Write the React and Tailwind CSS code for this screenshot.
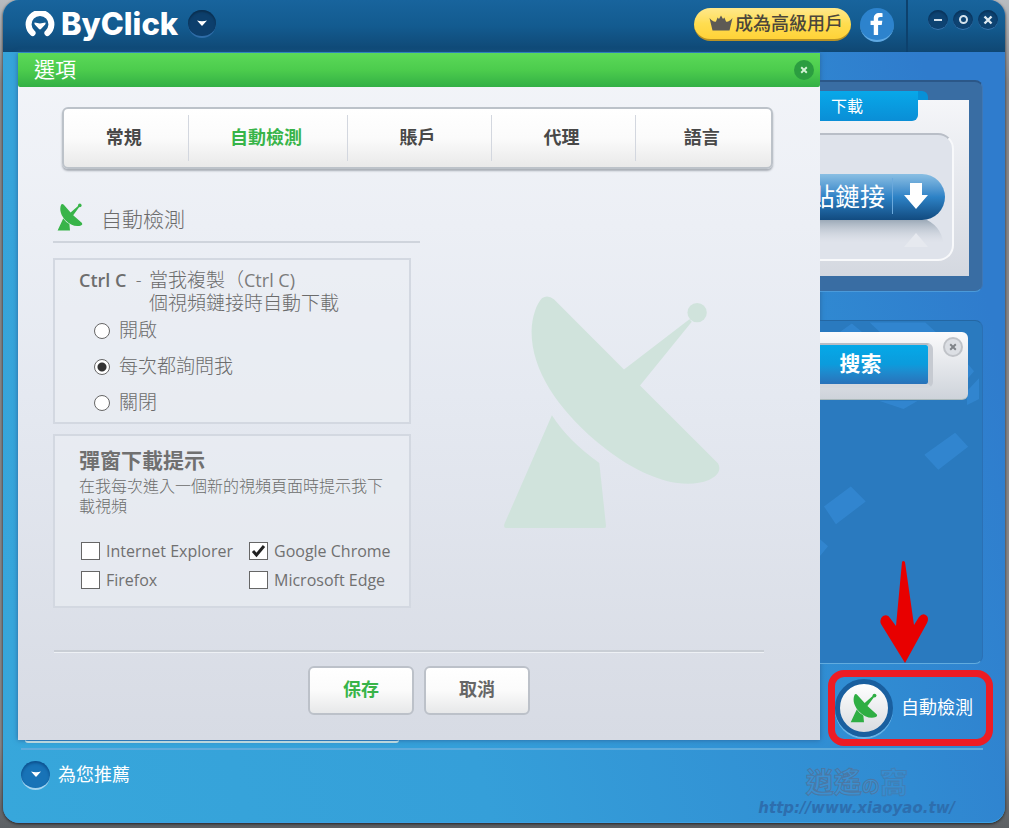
import React from "react";

const cx = (...names) => names.filter(Boolean).join(" ");

function Dish({ className }) {
  return (
    <svg viewBox="70 46 652 698" className={className} fill="currentColor" aria-hidden="true">
      <path d="M222 56 L432 266 L628 116 L635 123 L480 314 L714 548 C726 572 706 588 686 597 C600 632 470 585 345 478 C235 382 155 270 155 152 C156 108 170 70 186 53 Q203 41 222 56 Z" />
      <circle cx="651" cy="96" r="29" />
      <path d="M216 403 Q265 480 358 546 L378 734 Q379 741 371 741 L78 741 Q70 740 74 728 Z" />
    </svg>
  );
}

function SmallDish({ className }) {
  return (
    <svg viewBox="0 0 26 28" className={className} fill="currentColor" aria-hidden="true">
      <path d="M4.2 1.6 Q5.4 0.4 6.8 1.8 L13.6 9.4 L21.6 2.4 L22.6 3.4 L16.2 12.2 L25 20 Q26 21.6 24 22.4 C19 24.4 13 21.8 8.6 17.4 C4.4 13.2 1.8 7 4.2 1.6 Z" />
      <circle cx="22.8" cy="2.4" r="1.8" />
      <path d="M6.2 15.4 Q8.6 18.8 12.4 21 L13 27.4 H0.6 Z" />
    </svg>
  );
}

function Cross({ className }) {
  return (
    <svg viewBox="0 0 10 10" className={className} stroke="currentColor" strokeWidth="2.4" aria-hidden="true">
      <path d="M1.5 1.5 L8.5 8.5 M8.5 1.5 L1.5 8.5" />
    </svg>
  );
}

function LogoMark() {
  return (
    <svg viewBox="0 0 30 26" className="h-[26px] w-[30px]" fill="none" aria-hidden="true">
      <path d="M7.6 22 A11.4 11.4 0 1 1 22.4 22" stroke="#fff" strokeWidth="6" strokeLinecap="round" />
      <path d="M9.6 11.6 Q15 13.2 20.4 11.6 Q21 12.4 20.2 13.4 L16 18 Q15 18.8 14 18 L9.8 13.4 Q9 12.4 9.6 11.6 Z" fill="#fff" />
    </svg>
  );
}

function Chevron({ className }) {
  return (
    <svg viewBox="0 0 10 6" className={className} fill="#fff" aria-hidden="true">
      <path d="M0 0.5 Q5 2 10 0.5 L5.5 5.5 Q5 6 4.5 5.5 Z" />
    </svg>
  );
}

function Crown() {
  return (
    <svg viewBox="0 0 24 16" className="h-4 w-6" fill="#5d5a55" aria-hidden="true">
      <path d="M0.5 3 Q4.5 7.6 7 6.6 L8.6 2.6 L10 4 L12 0.6 L14 4 L15.4 2.6 L17 6.6 Q19.5 7.6 23.5 3 L20.5 15.5 L3.5 15.5 Z" />
    </svg>
  );
}

const roundDark =
  "flex size-5 items-center justify-center rounded-full border-b border-[#3a76b0] bg-[#0e4372] text-[#dfeaf2] shadow-[inset_0_2px_2px_#09345c]";

function TitleBar() {
  return (
    <header className="flex h-[52px] shrink-0 items-start bg-linear-to-b from-[#18649d] via-[#135b90] to-[#0f4773] pl-[22px] pr-[7px]">
      <div className="flex flex-1 items-center pt-1">
        <LogoMark />
        <h1 className="ml-[6px] font-['Inter',sans-serif] text-[31px] leading-10 font-extrabold text-white">ByClick</h1>
        <button aria-label="menu" className="ml-[10px] flex size-7 items-center justify-center rounded-full border-b-2 border-[#2f6da8] bg-[#0d3f6c] shadow-[inset_0_2px_2px_#0a2f50]">
          <Chevron className="h-[6px] w-[10px]" />
        </button>
      </div>
      <button className="mt-2 flex h-[33px] w-[157px] items-center rounded-full border-b-2 border-[#b99325] bg-linear-to-b from-[#ffe88a] via-[#ffdd50] to-[#ffd237] pb-px pl-[15px] text-lg leading-6 font-medium whitespace-nowrap text-[#4b463b]">
        <Crown />
        <span className="ml-[2px]">成為高級用戶</span>
      </button>
      <a href="#facebook" aria-label="Facebook" className="mt-2 ml-[9px] flex size-[34px] items-center justify-center rounded-full border-b-2 border-[#5fa9e4] bg-[#2d83cd]">
        <svg viewBox="0 0 16 26" className="h-6 w-4" fill="#fff" aria-hidden="true">
          <path d="M4.5 25 V14 H1 V9.6 H4.5 V7 C4.5 3 6.8 1 10.5 1 C12.3 1 13.6 1.2 14 1.3 V5.3 H11.5 C9.7 5.3 9.2 6.2 9.2 7.5 V9.6 H13.8 L13.1 14 H9.2 V25 Z" />
        </svg>
      </a>
      <div className="ml-3 flex h-full items-start gap-[5px] border-l-2 border-[#0d416d] pt-[10px] pl-5">
        <button aria-label="minimize" className={roundDark}><span className="h-[2px] w-2 bg-[#d5e2ec]" /></button>
        <button aria-label="maximize" className={roundDark}><span className="size-[9px] rounded-full border-2 border-[#d5e2ec]" /></button>
        <button aria-label="close window" className={roundDark}><Cross className="size-[10px]" /></button>
      </div>
    </header>
  );
}

const tabs = ["常規", "自動檢測", "賬戶", "代理", "語言"];

function Tabs() {
  return (
    <nav className="ml-11 mr-[47px] grid grid-cols-[124fr_160fr_144fr_145fr_136fr] rounded-md border-2 border-[#bcc2c9] bg-linear-to-b from-white via-[#fbfbfb] to-[#e9e9e9] py-[6px] shadow-[0_2px_2px_#a9aeb6]">
      {tabs.map((t, i) => (
        <button
          key={t}
          className={cx(
            "h-[46px] pr-1 pb-0.5 text-lg leading-6 font-bold",
            i > 0 && "border-l border-[#d3d7df]",
            i === 1 ? "text-[#38b449]" : "text-[#484848]"
          )}
        >
          {t}
        </button>
      ))}
    </nav>
  );
}

const box = "border-2 border-[#d3d8e1] bg-[#ebeff4]/60 pl-6";

function Radio({ label, checked }) {
  return (
    <label className="flex h-9 items-center gap-[9px]">
      <input
        type="radio"
        name="copy"
        defaultChecked={checked}
        className="size-4 appearance-none rounded-full border border-[#666] bg-white checked:bg-[radial-gradient(circle,#333_4px,white_5px)]"
      />
      <span className="pb-0.5">{label}</span>
    </label>
  );
}

function Check({ label, checked }) {
  return (
    <label className="flex items-center gap-[6px]">
      <span className="relative flex">
        <input type="checkbox" defaultChecked={checked} className="peer h-[18px] w-[19px] appearance-none border border-[#666] bg-white" />
        <svg viewBox="0 0 19 18" className="pointer-events-none absolute inset-0 hidden peer-checked:block" fill="none" stroke="#222" strokeWidth="3" aria-hidden="true">
          <path d="M4 9 L7.5 13 L15 4" />
        </svg>
      </span>
      {label}
    </label>
  );
}

function Options() {
  return (
    <section aria-label="選項" className="mt-px bg-linear-to-b from-[#f3f5f9] via-[#e5e9f1] to-[#d7dbe4] shadow-[0_0_5px_#2b669c]">
      <header className="flex h-[34px] items-center justify-between rounded-b-xs bg-linear-to-b from-[#5bd958] via-[#4ccc4d] to-[#33b045] pr-[6px] pl-4">
        <h2 className="pb-0.5 text-[21px] leading-7 text-white">選項</h2>
        <button aria-label="close" className="flex size-5 items-center justify-center rounded-full bg-[#2b9d40] text-[#d3f2d5]">
          <Cross className="size-2" />
        </button>
      </header>
      <div className="pt-5">
        <Tabs />
        <div className="flex items-start pt-[34px] pl-[35px] text-[#6b6b6b]">
          <div className="w-[367px] shrink-0">
            <h3 className="flex h-10 items-start border-b-2 border-[#cfd4dc] pl-1 text-[21px] leading-8">
              <SmallDish className="h-7 w-[26px] text-[#38b449]" />
              <span className="ml-[18px] font-light">自動檢測</span>
            </h3>
            <div className="w-[358px]">
              <fieldset className={cx(box, "mt-[15px] h-[166px] pt-[9px] text-[19px] leading-[23px] font-light")}>
                <div className="flex">
                  <span className="w-[70px] shrink-0 text-lg leading-[23px] whitespace-pre"><b className="font-semibold text-[#6d6d6d]">Ctrl C</b>{"  -"}</span>
                  <p>當我複製（<span className="text-lg leading-[23px] font-normal text-[#7b7b7b]">Ctrl C)</span><br />個視頻鏈接時自動下載</p>
                </div>
                <div className="-mt-0.5 pl-[15px]">
                  <Radio label="開啟" />
                  <Radio label="每次都詢問我" checked />
                  <Radio label="關閉" />
                </div>
              </fieldset>
              <section className={cx(box, "mt-[10px] h-[174px] pt-2")}>
                <h4 className="text-[21px] leading-8 font-bold text-[#707070]">彈窗下載提示</h4>
                <p className="w-[304px] text-base leading-5 font-light">在我每次進入一個新的視頻頁面時提示我下載視頻</p>
                <div className="mt-[23px] ml-[2px] grid grid-cols-[168px_1fr] gap-y-[5px] text-base leading-6 whitespace-nowrap text-[#707070]">
                  <Check label="Internet Explorer" />
                  <Check label="Google Chrome" checked />
                  <Check label="Firefox" />
                  <Check label="Microsoft Edge" />
                </div>
              </section>
            </div>
          </div>
          <Dish className="mt-[93px] ml-[83px] h-[233px] w-[218px] text-[#d0e3dc]" />
        </div>
        <footer className="mt-[42px] mr-14 ml-9 border-t-2 border-[#c9ced5] pb-[25px] shadow-[inset_0_1px_0_#eef1f5]">
          <div className="flex justify-center gap-[10px] pt-[14px] pl-5">
            {["保存", "取消"].map((t, i) => (
              <button
                key={t}
                className={cx(
                  "h-[49px] w-[106px] rounded-md border-2 border-[#bcc1c9] bg-linear-to-b from-white via-[#fbfbfb] to-[#e7e8e9] pb-1 text-lg leading-6 font-bold",
                  i === 0 ? "text-[#38b449]" : "text-[#666]"
                )}
              >
                {t}
              </button>
            ))}
          </div>
        </footer>
      </div>
    </section>
  );
}

function DownloadPanel() {
  return (
    <section className="mr-[22px] h-[212px] rounded-r-lg border-t-2 border-r border-b border-t-[#2b5788] border-r-[#3f77b5] border-b-[#4b9ada] bg-[#396da3] pt-[9px] pr-[13px]">
      <div className="flex items-start">
        <h3 className="relative z-10 h-[30px] w-[98px] rounded-br-md bg-linear-to-b from-[#08a8e9] to-[#0a8ed6] pl-[11px] text-base leading-[30px] text-white">下載</h3>
        <span className="h-[9px] w-[10px] rounded-tr-md bg-[#0791d8]" />
      </div>
      <div className="-mt-[21px] h-[176px] bg-linear-to-b from-[#f5f6f9] to-[#d4d8e0] pt-[33px] pr-[15px]">
        <div className="flex h-32 flex-col items-end overflow-hidden rounded-r-2xl border-t-2 border-r-2 border-b-2 border-t-[#b9bec7] border-r-[#f8f9fb] border-b-[#f8f9fb] bg-[#dfe3eb] pt-[39px] pr-[7px]">
          <button className="flex h-[46px] w-[180px] shrink-0 items-center justify-end rounded-r-full bg-linear-to-b from-[#8abfe3] via-[#2d82c6] to-[#124b80] pr-4 pb-0.5 text-[25px] leading-9 whitespace-nowrap text-white">
            粘貼鏈接
            <span className="ml-[7px] h-9 border-l border-[#6ba9dc]" />
            <svg viewBox="0 0 26 28" className="ml-[10px] h-7 w-[26px]" fill="#fff" aria-hidden="true">
              <path d="M7 1 H19 V13 H25 L13 27 L1 13 H7 Z" />
            </svg>
          </button>
          <svg viewBox="0 0 180 36" className="h-9 w-[180px] shrink-0" aria-hidden="true">
            <defs>
              <linearGradient id="mirror" x1="0" y1="0" x2="0" y2="1">
                <stop offset="0" stopColor="#8b9bab" stopOpacity="0.8" />
                <stop offset="0.8" stopColor="#c7cdd6" stopOpacity="0" />
              </linearGradient>
            </defs>
            <path d="M0 0 H162 Q178 8 179 28 H0 Z" fill="url(#mirror)" />
            <path d="M151 13 L163 27 H139 Z" fill="#e6e9ef" />
          </svg>
        </div>
      </div>
    </section>
  );
}

function SearchPanel() {
  return (
    <section className="relative mt-7 mr-[22px] h-[344px] rounded-r-lg border-t border-r border-b border-t-[#2467a3] border-r-[#2b70b4] border-b-[#62acdf] bg-[#2a7abf] pt-[11px]">
      <svg viewBox="0 0 163 343" className="absolute inset-0 size-full" fill="#348ad4" fillOpacity="0.75" aria-hidden="true">
        <path d="M18 12 L32 2 L44 12 Z M50 1 H106 L118 12 H62 Z" />
        <path d="M105 134 L136 112 L149 126 L119 149 Z" />
        <path d="M4 186 L31 166 L46 181 L16 204 Z" />
        <path d="M148 42 L155 50 L148 58 Z M148 70 L160 57 V78 L148 84 Z M60 80 H98 L84 88 Z M0 219 L8 226 L0 236 Z" />
      </svg>
      <div className="relative mr-[14px] flex h-[68px] items-start justify-between rounded-r-md border-b border-[#aab9bb] bg-linear-to-b from-[#fbfbfc] to-[#ced3da] pt-[11px] pr-[5px]">
        <div className="rounded-r-md border-t-2 border-r-[5px] border-b-4 border-t-[#b9bdc5] border-r-[#c6cad1] border-b-[#d3d7dd]">
          <button className="h-[39px] w-[108px] rounded-r-xs bg-linear-to-b from-[#05a9e8] via-[#0b9bdc] to-[#2872b9] pr-[27px] pb-1 text-[21px] leading-7 font-bold text-white">搜索</button>
        </div>
        <button aria-label="clear search" className="-mt-1.5 flex size-5 items-center justify-center rounded-full border-2 border-[#c0c3c8] bg-[#dcdfe4] text-[#7f8388]">
          <Cross className="size-2" />
        </button>
      </div>
      <svg viewBox="0 0 48 102" className="absolute right-[54px] bottom-0 h-[102px] w-12" fill="#e80000" aria-hidden="true">
        <path d="M22 1 Q23 -1 25 1 L34 64 L39 56 Q43 51 47 55 Q49 58 47 62 L25 102 L1 63 Q-1 58 3 55 Q8 53 10 57 L16 65 Z" />
      </svg>
    </section>
  );
}

export default function App() {
  return (
    <div className="flex min-h-screen flex-col bg-[linear-gradient(to_bottom,#b9bcc0,#858689_10%,#858689_90%,#5c6064)] pr-1 pb-[5px] pl-[3px] font-['Open_Sans','Noto_Sans_CJK_TC',sans-serif]">
      <div className="flex flex-1 flex-col overflow-hidden rounded-2xl border-b border-[#3ba0e4] bg-[linear-gradient(75deg,#37a7db_0%,#359fd9_40%,#308bd2_75%,#2f7ccd_92%)] shadow-[0_1px_3px_#222]">
        <TitleBar />
        <main className="flex items-start pl-[15px]">
          <div className="min-w-0 flex-1">
            <Options />
            <div className="ml-[7px] h-[3px] w-[374px] rounded-b-sm border-b-2 border-[#b9d5dc] bg-[#2e77b7]" />
          </div>
          <aside className="w-[185px] shrink-0 overflow-hidden pt-7">
            <DownloadPanel />
            <SearchPanel />
            <button className="mt-[6px] ml-2 flex h-[76px] w-[165px] items-center rounded-2xl border-[7px] border-[#ed1c24] text-left text-lg leading-6 whitespace-nowrap text-white">
              <span className="flex size-[58px] shrink-0 items-center justify-center rounded-full border-[5px] border-[#195f9f] bg-linear-to-b from-white to-[#d9dce0] shadow-[0_2px_0_#68b4e8]">
                <SmallDish className="h-[30px] w-7 text-[#2fae43]" />
              </span>
              <span className="ml-2 pb-0.5">自動檢測</span>
            </button>
          </aside>
        </main>
        <footer className="mt-[2px] mr-[22px] ml-[18px] flex flex-1 items-start justify-between border-t-2 border-[#5fabdc] pt-2">
          <button className="flex items-center gap-2 text-lg leading-8 text-white">
            <span className="flex size-[29px] items-center justify-center rounded-full border-b-2 border-[#a4d4f0] bg-[#1873b7] shadow-[inset_0_2px_3px_#0c4f8c]">
              <Chevron className="h-[6px] w-3" />
            </span>
            <span className="pb-0.5">為您推薦</span>
          </button>
          <div className="mr-7 flex flex-col items-center pt-2 text-[#2d6eae]">
            <p className="text-[28px] leading-8 font-bold [-webkit-text-stroke:1px_#4b78a5] text-[#3b8fd0]">逍遙<span className="text-lg">の</span><span className="opacity-60">窩</span></p>
            <a href="#site" className="-mt-0.5 font-['DejaVu_Sans',sans-serif] text-[15px] leading-5 font-bold italic">http://www.xiaoyao.tw/</a>
          </div>
        </footer>
      </div>
    </div>
  );
}
